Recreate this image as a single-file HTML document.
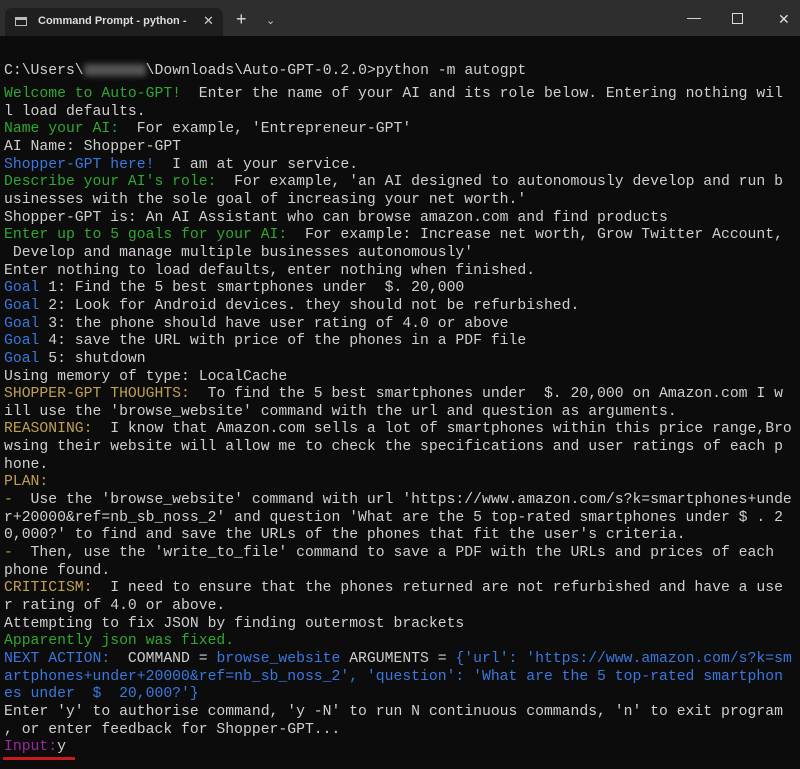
<!DOCTYPE html>
<html><head><meta charset="utf-8"><style>
html,body{margin:0;padding:0;background:#0c0c0c;width:800px;height:769px;overflow:hidden}
.tb{position:absolute;left:0;top:0;width:800px;height:36px;background:#2e2e2e}
.tab{position:absolute;left:5px;top:8px;width:218px;height:28px;background:#1f1f1f;border-radius:7px 7px 0 0}
.tab .ic{position:absolute;left:10px;top:9px;width:12px;height:9px;border:1px solid #bbb;border-top-width:3px;box-sizing:border-box}
.tab .t{position:absolute;left:33px;top:7px;font:bold 11px "Liberation Sans",sans-serif;color:#ddd}
.tab .x{position:absolute;left:198px;top:5px;font:13px "Liberation Sans",sans-serif;color:#ccc}
.plus{position:absolute;left:236px;top:9px;font:18px "Liberation Sans",sans-serif;color:#ddd}
.chev{position:absolute;left:266px;top:14px;font:11px "Liberation Sans",sans-serif;color:#ccc}
.wc{position:absolute;top:11px;font:14px "Liberation Sans",sans-serif;color:#ddd}
pre,.l1{position:absolute;left:4px;margin:0;font:14.75px/17.65px "Liberation Mono",monospace;color:#cfcfcf;white-space:pre}
pre{top:86px}.l1{top:63px}
.g{color:#2fa82f}.b{color:#3a78e0}.y{color:#c0a050}.p{color:#9a2aa0}
.blur{display:inline-block;width:62px;height:12px;background:#555;filter:blur(3px);vertical-align:middle}
.ul{position:absolute;left:3px;top:757px;width:72px;height:3px;background:#c81a1a}
</style></head><body>
<div class="tb">
<div class="tab"><div class="ic"></div><div class="t">Command Prompt - python -</div><div class="x">✕</div></div>
<div class="plus">+</div><div class="chev">⌄</div>
<div class="wc" style="left:687px;top:9px">—</div>
<div class="wc" style="left:732px;top:13px;width:9px;height:9px;border:1.5px solid #ddd"></div>
<div class="wc" style="left:778px">✕</div>
</div>
<div class="l1">C:\Users\<span class="blur"></span>\Downloads\Auto-GPT-0.2.0&gt;python -m autogpt</div>
<pre><span class="g">Welcome to Auto-GPT!</span>  Enter the name of your AI and its role below. Entering nothing wil
l load defaults.
<span class="g">Name your AI:</span>  For example, 'Entrepreneur-GPT'
AI Name: Shopper-GPT
<span class="b">Shopper-GPT here!</span>  I am at your service.
<span class="g">Describe your AI's role:</span>  For example, 'an AI designed to autonomously develop and run b
usinesses with the sole goal of increasing your net worth.'
Shopper-GPT is: An AI Assistant who can browse amazon.com and find products
<span class="g">Enter up to 5 goals for your AI:</span>  For example: Increase net worth, Grow Twitter Account,
 Develop and manage multiple businesses autonomously'
Enter nothing to load defaults, enter nothing when finished.
<span class="b">Goal</span> 1: Find the 5 best smartphones under  $. 20,000
<span class="b">Goal</span> 2: Look for Android devices. they should not be refurbished.
<span class="b">Goal</span> 3: the phone should have user rating of 4.0 or above
<span class="b">Goal</span> 4: save the URL with price of the phones in a PDF file
<span class="b">Goal</span> 5: shutdown
Using memory of type: LocalCache
<span class="y">SHOPPER-GPT THOUGHTS:</span>  To find the 5 best smartphones under  $. 20,000 on Amazon.com I w
ill use the 'browse_website' command with the url and question as arguments.
<span class="y">REASONING:</span>  I know that Amazon.com sells a lot of smartphones within this price range,Bro
wsing their website will allow me to check the specifications and user ratings of each p
hone.
<span class="y">PLAN:</span>
<span class="y">-</span>  Use the 'browse_website' command with url 'https://www.amazon.com/s?k=smartphones+unde
r+20000&amp;ref=nb_sb_noss_2' and question 'What are the 5 top-rated smartphones under $ . 2
0,000?' to find and save the URLs of the phones that fit the user's criteria.
<span class="y">-</span>  Then, use the 'write_to_file' command to save a PDF with the URLs and prices of each
phone found.
<span class="y">CRITICISM:</span>  I need to ensure that the phones returned are not refurbished and have a use
r rating of 4.0 or above.
Attempting to fix JSON by finding outermost brackets
<span class="g">Apparently json was fixed.</span>
<span class="b">NEXT ACTION:</span>  COMMAND = <span class="b">browse_website</span> ARGUMENTS = <span class="b">{'url': 'https://www.amazon.com/s?k=sm
artphones+under+20000&amp;ref=nb_sb_noss_2', 'question': 'What are the 5 top-rated smartphon
es under  $  20,000?'}</span>
Enter 'y' to authorise command, 'y -N' to run N continuous commands, 'n' to exit program
, or enter feedback for Shopper-GPT...
<span class="p">Input:</span>y</pre>
<div class="ul"></div>
</body></html>
